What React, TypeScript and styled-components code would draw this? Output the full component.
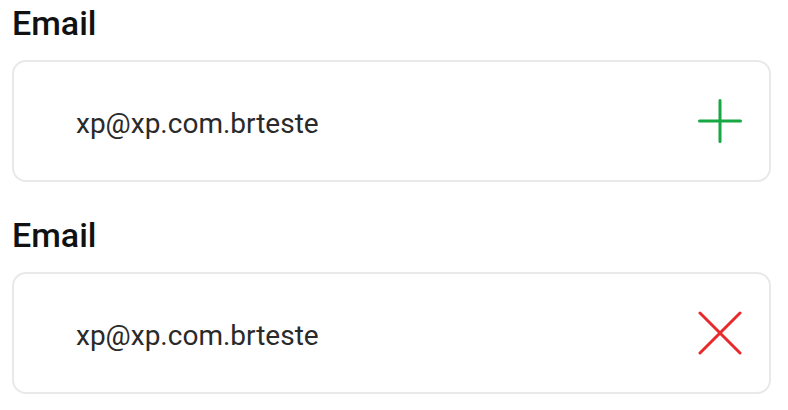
import styled, { createGlobalStyle } from 'styled-components';

const GlobalStyle = createGlobalStyle`
    body {
        margin: 0;
        background: #ffffff;
        font-family: Roboto, "Liberation Sans", sans-serif;
    }
`;

const Page = styled.div`
    display: flex;
    flex-direction: column;
    gap: 36px;
    padding: 6px 17px 0 12px;
`;

const Field = styled.div`
    display: flex;
    flex-direction: column;
    gap: 20px;
`;

const Label = styled.div`
    font-size: 34px;
    line-height: 34px;
    font-weight: 500;
    color: #111111;
`;

const Box = styled.div`
    box-sizing: border-box;
    height: 122px;
    border: 2px solid #e9e9e9;
    border-radius: 14px;
    display: flex;
    align-items: center;
    justify-content: space-between;
    padding: 0 27px 0 62px;
`;

const Value = styled.span`
    font-size: 28px;
    color: #2a2a2a;
    margin-top: 5px;
`;

const IconButton = styled.button<{ $color: string }>`
    border: 0;
    background: none;
    padding: 0;
    width: 44px;
    height: 44px;
    color: ${({ $color }) => $color};
    display: flex;
`;

const PlusIcon = () => (
    <svg width="44" height="44" viewBox="0 0 44 44" fill="none" stroke="currentColor" strokeWidth="3" strokeLinecap="round">
        <path d="M22 1.5v41M1.5 22h41" />
    </svg>
);

const CloseIcon = () => (
    <svg width="44" height="44" viewBox="0 0 44 44" fill="none" stroke="currentColor" strokeWidth="3" strokeLinecap="round">
        <path d="M2 2l40 40M42 2L2 42" />
    </svg>
);

type EmailFieldProps = {
    readonly value: string
    readonly removable?: boolean
}

const EmailField = ({ value, removable }: EmailFieldProps) => (
    <Field>
        <Label>Email</Label>
        <Box>
            <Value>{value}</Value>
            {removable ?
                <IconButton $color="#ea2a2a"><CloseIcon /></IconButton> :
                <IconButton $color="#17a844"><PlusIcon /></IconButton>}
        </Box>
    </Field>
);

export default function App() {
    return (
        <>
            <GlobalStyle />
            <Page>
                <EmailField value="xp@xp.com.brteste" />
                <EmailField value="xp@xp.com.brteste" removable />
            </Page>
        </>
    );
}
